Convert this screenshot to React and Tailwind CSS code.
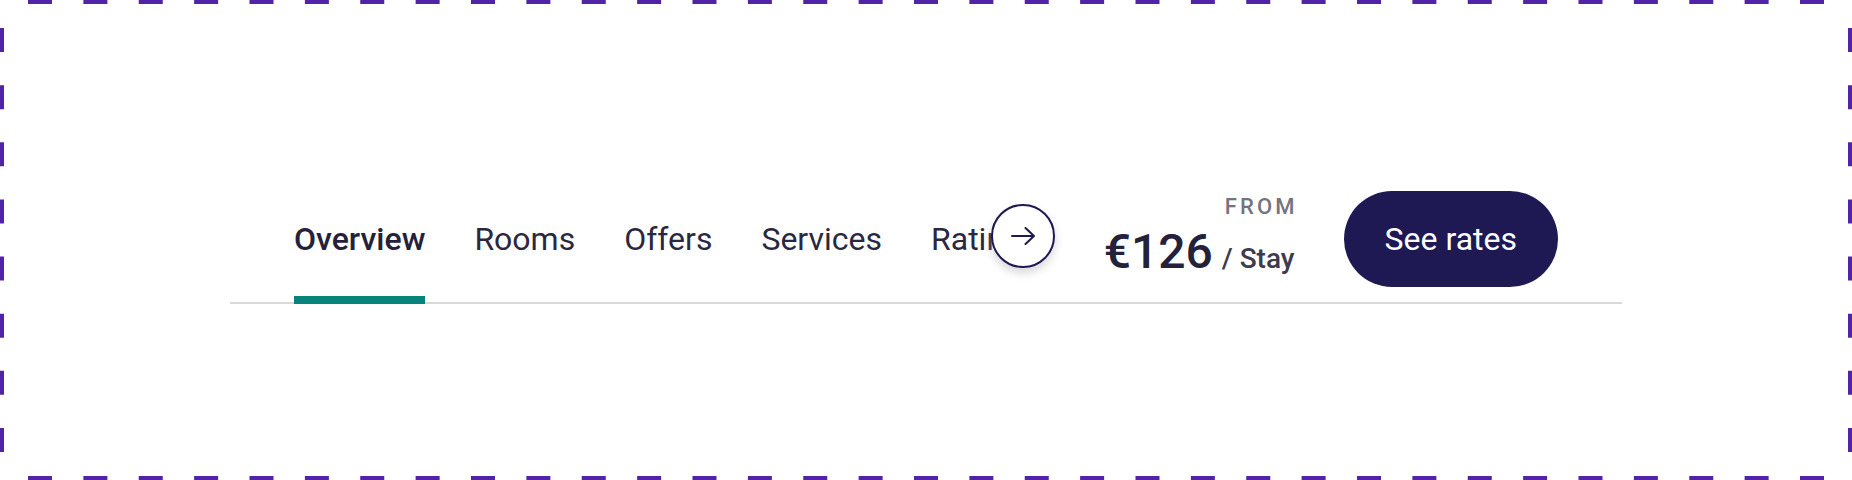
import { useState } from "react";

/* ── Onglets de la fiche hôtel ── */
const TABS = ["Overview", "Rooms", "Offers", "Services", "Ratings", "Location"];

export default function App() {
  const [active, setActive] = useState("Overview");

  return (
    <div className="relative h-[480px] w-full bg-white flex items-center justify-center font-['Roboto',sans-serif]">
      <DashedFrame />

      <nav className="w-[1392px] h-[128px] border-b-2 border-[#d9d9d9] flex items-center px-16 gap-[49px]">
        <div className="relative flex-1 min-w-0 self-stretch -mb-[2px]">
          <ul className="flex h-full gap-[49px] overflow-hidden whitespace-nowrap">
            {TABS.map((tab) => (
              <li key={tab} className="relative h-full flex items-center">
                <button
                  onClick={() => setActive(tab)}
                  className={
                    tab === active
                      ? "text-[32px] font-medium text-[#24223a] -mt-[3px]"
                      : "text-[32px] text-[#2a2840] -mt-[3px]"
                  }
                >
                  {tab}
                </button>
                {tab === active && (
                  <span className="absolute left-0 right-0 bottom-0 h-2 bg-[#06837b]" />
                )}
              </li>
            ))}
          </ul>

          {/* fondu + flèche */}
          <div className="absolute right-[30px] top-0 bottom-2 w-[40px] bg-linear-to-r from-white/0 to-white" />
          <button className="absolute right-0 top-[28px] w-16 h-16 rounded-full bg-white border-2 border-[#1e1853] shadow-[0_5px_10px_rgba(0,0,0,0.16)] flex items-center justify-center">
            <svg width="24" height="18" viewBox="0 0 24 18" fill="none" stroke="#1e1853" strokeWidth="2" strokeLinecap="round" strokeLinejoin="round">
              <path d="M1 9h22M14.5 1l8.5 8-8.5 8" />
            </svg>
          </button>
        </div>

        {/* Prix */}
        <div className="flex flex-col items-end -mt-[6px]">
          <span className="text-[22px] leading-none font-medium tracking-[0.14em] text-[#75737f] -mr-[3px]">
            FROM
          </span>
          <div className="flex items-baseline gap-[9px] mt-[10px]">
            <span className="text-[48px] leading-none font-medium text-[#24223a]">€126</span>
            <span className="text-[28px] leading-none font-medium text-[#3d3b4c]">/ Stay</span>
          </div>
        </div>

        {/* CTA */}
        <button className="h-[96px] px-[41px] rounded-full bg-[#1e1853] text-white text-[32px]">
          See rates
        </button>
      </nav>
    </div>
  );
}

/* ── Cadre pointillé violet (décor) ── */
function DashedFrame() {
  return (
    <svg
      className="absolute inset-0 pointer-events-none"
      width="1852"
      height="480"
      fill="none"
      stroke="#5023a9"
      strokeWidth="4"
    >
      <line x1="28" y1="2" x2="1824" y2="2" strokeDasharray="24 31.375" />
      <line x1="28" y1="478" x2="1824" y2="478" strokeDasharray="24 31.375" />
      <line x1="2" y1="28" x2="2" y2="452" strokeDasharray="24 33.143" />
      <line x1="1850" y1="28" x2="1850" y2="452" strokeDasharray="24 33.143" />
    </svg>
  );
}
